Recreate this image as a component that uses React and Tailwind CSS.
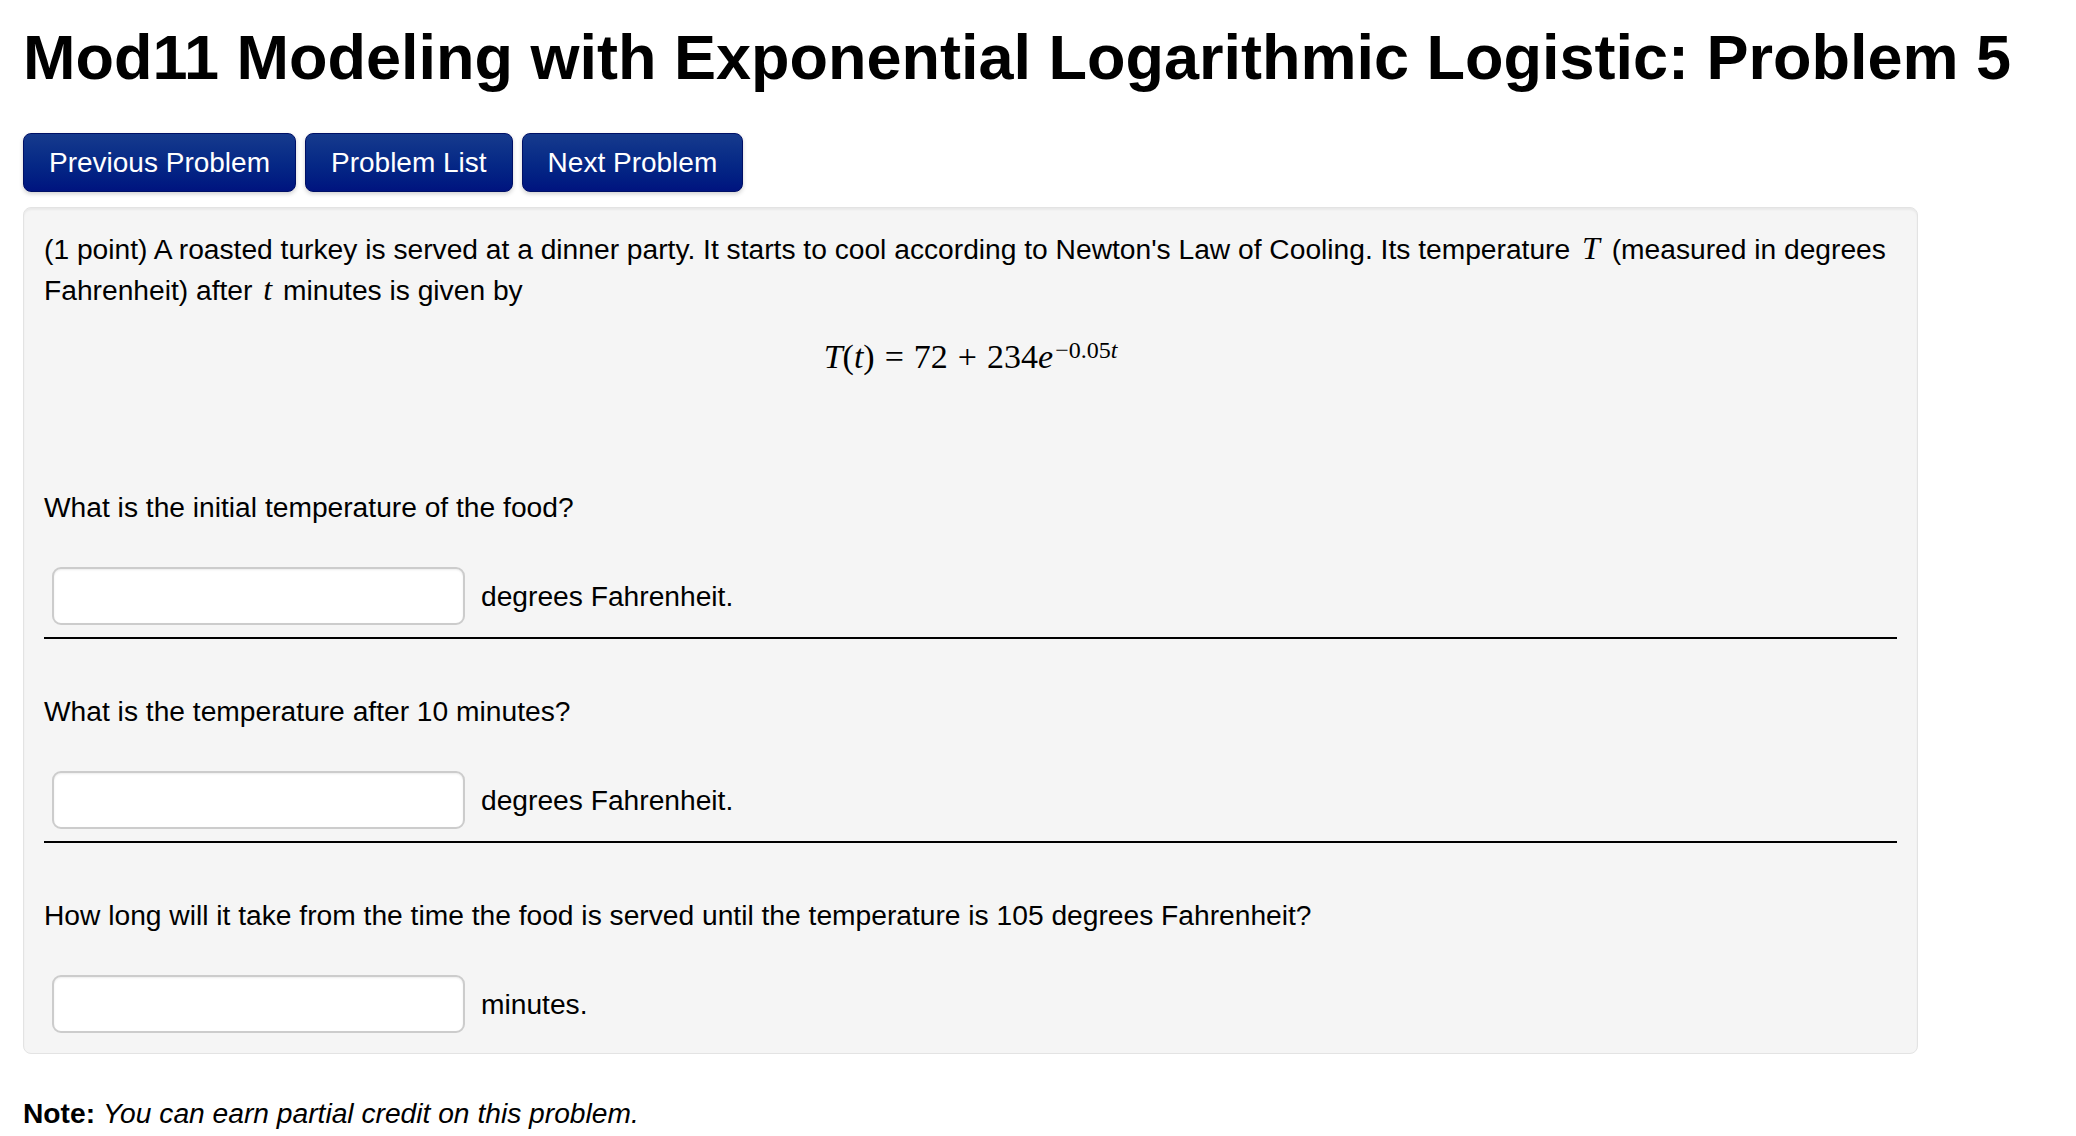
import React from "react";

function NavButton({ children }) {
  return (
    <button className="h-[59px] px-[25px] flex items-center rounded-[8px] border border-[#001066] bg-linear-to-b from-[#163a8d] to-[#00137f] text-white text-[28px] leading-[40px] shadow-[0_2px_4px_rgba(0,0,0,0.18)]">
      {children}
    </button>
  );
}

function AnswerRow({ question, unit, last }) {
  return (
    <div>
      <p className="leading-[40px]">{question}</p>
      <div className="mt-[40px] flex items-center">
        <input
          type="text"
          className="ml-[8px] w-[413px] h-[58px] bg-white border-2 border-[#cccccc] rounded-[9px] shadow-[inset_0_1px_2px_rgba(0,0,0,0.08)] outline-none"
        />
        <span className="ml-[16px] leading-[40px]">{unit}</span>
      </div>
      {!last && <div className="mt-[12px] border-t-2 border-black" />}
    </div>
  );
}

export default function App() {
  const serif = { fontFamily: '"Liberation Serif", "Times New Roman", serif' };

  return (
    <div
      className="min-h-screen bg-white text-black px-[23px]"
      style={{ fontFamily: '"Liberation Sans", Arial, Helvetica, sans-serif' }}
    >
      {/* Title */}
      <h1 className="pt-[22px] text-[63px] leading-[70px] font-bold whitespace-nowrap">
        Mod11 Modeling with Exponential Logarithmic Logistic: Problem 5
      </h1>

      {/* Nav */}
      <div className="mt-[41px] flex gap-[9px]">
        <NavButton>Previous Problem</NavButton>
        <NavButton>Problem List</NavButton>
        <NavButton>Next Problem</NavButton>
      </div>

      {/* Problem panel */}
      <div className="mt-[15px] w-[1895px] bg-[#f5f5f5] border border-[#e3e3e3] rounded-[8px] shadow-[inset_0_2px_2px_rgba(0,0,0,0.05)] px-[20px] pt-[20px] pb-[20px] text-[28.2px]">
        <p className="leading-[40px] whitespace-nowrap">
          (1 point) A roasted turkey is served at a dinner party. It starts to cool according to Newton's Law of
          Cooling. Its temperature{" "}
          <span className="mx-[4px] italic text-[32px]" style={serif}>
            T
          </span>{" "}
          (measured in degrees
        </p>
        <p className="leading-[40px]">
          Fahrenheit) after{" "}
          <span className="mx-[3px] italic text-[32px]" style={serif}>
            t
          </span>{" "}
          minutes is given by
        </p>

        {/* Formula */}
        <div className="mt-[21px] h-[50px] flex items-center justify-center text-[34px]" style={serif}>
          <span>
            <span className="italic">T</span>(<span className="italic">t</span>)
            <span className="mx-[10px]">=</span>72<span className="mx-[10px]">+</span>234
            <span className="italic">e</span>
            <sup className="relative top-[-10px] ml-[2px] text-[24px]">
              −0.05<span className="italic">t</span>
            </sup>
          </span>
        </div>

        <div className="mt-[106px] flex flex-col gap-[52px]">
          <AnswerRow question="What is the initial temperature of the food?" unit="degrees Fahrenheit." />
          <AnswerRow question="What is the temperature after 10 minutes?" unit="degrees Fahrenheit." />
          <AnswerRow
            question="How long will it take from the time the food is served until the temperature is 105 degrees Fahrenheit?"
            unit="minutes."
            last
          />
        </div>
      </div>

      {/* Note */}
      <p className="mt-[39px] text-[28.2px] leading-[40px]">
        <span className="font-bold">Note:</span> <i>You can earn partial credit on this problem.</i>
      </p>
    </div>
  );
}
